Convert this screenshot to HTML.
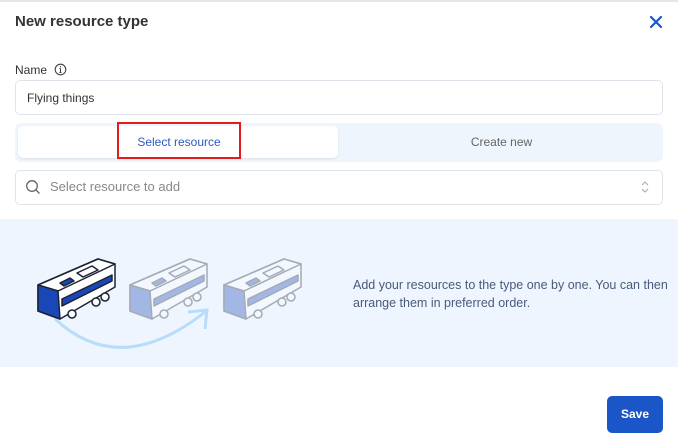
<!DOCTYPE html>
<html><head><style>
*{box-sizing:border-box;margin:0;padding:0}
body{width:678px;height:443px;overflow:hidden;background:#fff;font-family:"Liberation Sans",sans-serif;position:relative}
.abs{position:absolute}
</style></head><body>
<div class="abs" style="left:0;top:0;width:678px;height:2px;background:#e3e6ea"></div>
<div class="abs" style="left:15px;top:13px;font-size:15px;font-weight:bold;color:#333">New resource type</div>
<svg class="abs" style="left:649px;top:15px" width="14" height="14" viewBox="0 0 14 14"><path d="M2 2L12 12M12 2L2 12" stroke="#1a56c8" stroke-width="2.2" stroke-linecap="round"/></svg>
<div class="abs" style="left:15px;top:63px;font-size:12px;color:#333">Name</div>
<svg class="abs" style="left:54px;top:63px" width="13" height="13" viewBox="0 0 13 13"><circle cx="6.5" cy="6.5" r="5.3" fill="none" stroke="#444" stroke-width="1.1"/><path d="M6.5 5.5v4M5.5 5.5h1M5.5 9.5h2" stroke="#444" stroke-width="1.1"/><circle cx="6.5" cy="3.8" r=".7" fill="#444"/></svg>
<div class="abs" style="left:15px;top:80px;width:648px;height:35px;border:1px solid #e0e4ea;border-radius:5px;font-size:12px;color:#333;padding:10px 0 0 11px">Flying things</div>
<div class="abs" style="left:15px;top:123px;width:648px;height:39px;background:#eef5fd;border-radius:6px"></div>
<div class="abs" style="left:18px;top:126px;width:320px;height:32px;background:#fff;border-radius:5px;box-shadow:0 1px 2px rgba(0,0,0,.08)"></div>
<div class="abs" style="left:117px;top:122px;width:124px;height:37px;border:2px solid #e41b1b"></div>
<div class="abs" style="left:118px;top:135px;width:122px;text-align:center;font-size:12px;color:#2a5bc4">Select resource</div>
<div class="abs" style="left:340px;top:135px;width:323px;text-align:center;font-size:12px;color:#666">Create new</div>
<div class="abs" style="left:15px;top:170px;width:648px;height:35px;border:1px solid #e0e4ea;border-radius:5px"></div>
<svg class="abs" style="left:25px;top:179px" width="16" height="16" viewBox="0 0 16 16"><circle cx="7" cy="7" r="5.3" fill="none" stroke="#666" stroke-width="1.3"/><path d="M11 11l3.5 3.5" stroke="#666" stroke-width="1.3"/></svg>
<div class="abs" style="left:50px;top:179px;font-size:13px;color:#888">Select resource to add</div>
<svg class="abs" style="left:640px;top:180px" width="10" height="14" viewBox="0 0 10 14"><path d="M2 5l3-3 3 3M2 9l3 3 3-3" stroke="#aaa" fill="none" stroke-width="1"/></svg>
<div class="abs" style="left:0;top:219px;width:678px;height:148px;background:#eef5fe"></div>
<svg class="abs" style="left:0;top:219px" width="340" height="148" viewBox="0 0 340 148">
<path d="M55 100 Q120 160 205 93" fill="none" stroke="#b8dcfb" stroke-width="3"/>
<path d="M188 93l19-2-2 19" fill="none" stroke="#b8dcfb" stroke-width="3"/>
<g opacity=".35"><g transform="translate(92,0)"><use href="#bus"/></g><g transform="translate(186,0)"><use href="#bus"/></g></g>
<g id="bus" stroke="#1d2333" stroke-width="1.5" stroke-linejoin="round">
<path d="M38 66 L98 40 L115 45 L115 68 L60 100 L38 92 Z" fill="#fff"/>
<path d="M38 66 L98 40 L115 45 L58 72 Z" fill="#fff"/>
<path d="M38 66 L58 72 L60 100 L38 92 Z" fill="#1a47b8"/>
<path d="M62 80 L112 56 L112 62 L62 87 Z" fill="#1a47b8"/>
<path d="M60 64 L70 59 L74 62 L64 67 Z" fill="#1a47b8"/>
<path d="M77 54 L92 47 L98 51 L83 58 Z" fill="#fff"/>
<circle cx="72" cy="95" r="4" fill="#fff"/><circle cx="96" cy="83" r="4" fill="#fff"/><circle cx="105" cy="78" r="4" fill="#fff"/>
</g>
</svg>
<div class="abs" style="left:353px;top:276px;font-size:12.5px;line-height:18px;color:#4a5a7a;width:325px">Add your resources to the type one by one. You can then arrange them in preferred order.</div>
<div class="abs" style="left:607px;top:396px;width:56px;height:37px;background:#1a56c8;border-radius:5px;color:#fff;font-size:12px;font-weight:bold;text-align:center;line-height:37px">Save</div>
</body></html>
